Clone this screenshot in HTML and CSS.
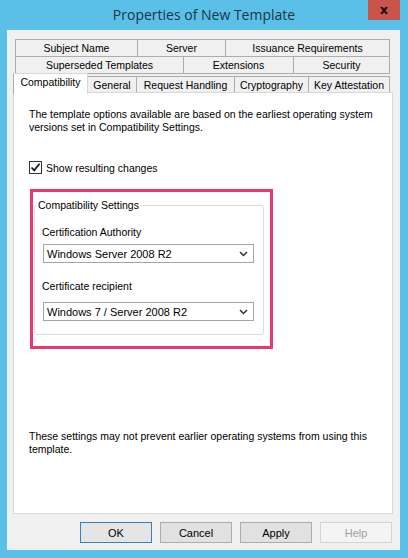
FILE: index.html
```html
<!DOCTYPE html>
<html lang="en">
<head>
  <meta charset="UTF-8">
  <title>Properties of New Template</title>
  <link rel="stylesheet" href="styles.css">
</head>
<body>

  <div class="window">
    <div class="titlebar">
      <span class="title">Properties of New Template</span>
      <button class="close-button">x</button>
    </div>

    <div class="client">
      <div class="tabs">
        <div class="tab-row row-1">
          <div class="tab">Subject Name</div>
          <div class="tab">Server</div>
          <div class="tab">Issuance Requirements</div>
        </div>
        <div class="tab-row row-2">
          <div class="tab">Superseded Templates</div>
          <div class="tab">Extensions</div>
          <div class="tab">Security</div>
        </div>
        <div class="tab-row row-3">
          <div class="tab selected">Compatibility</div>
          <div class="tab">General</div>
          <div class="tab">Request Handling</div>
          <div class="tab">Cryptography</div>
          <div class="tab">Key Attestation</div>
        </div>
      </div>

      <div class="panel">
        <p class="intro">The template options available are based on the earliest operating system versions set in Compatibility Settings.</p>

        <label class="check-row">
          <span class="checkbox">
            <svg width="11" height="11" viewBox="0 0 11 11"><path d="M1.5 5.5 L4.2 8.3 L9.5 1.8" fill="none" stroke="#1a1a1a" stroke-width="1.8"/></svg>
          </span>
          Show resulting changes
        </label>

        <div class="highlight">
          <fieldset class="group">
            <legend>Compatibility Settings</legend>

            <div class="field-label">Certification Authority</div>
            <div class="combo">
              <span>Windows Server 2008 R2</span>
              <svg width="9" height="6" viewBox="0 0 9 6"><path d="M1 1 L4.5 4.5 L8 1" fill="none" stroke="#333" stroke-width="1.5"/></svg>
            </div>

            <div class="field-label second">Certificate recipient</div>
            <div class="combo">
              <span>Windows 7 / Server 2008 R2</span>
              <svg width="9" height="6" viewBox="0 0 9 6"><path d="M1 1 L4.5 4.5 L8 1" fill="none" stroke="#333" stroke-width="1.5"/></svg>
            </div>
          </fieldset>
        </div>

        <p class="note">These settings may not prevent earlier operating systems from using this template.</p>
      </div>

      <div class="buttons">
        <button class="btn default">OK</button>
        <button class="btn">Cancel</button>
        <button class="btn">Apply</button>
        <button class="btn" disabled>Help</button>
      </div>
    </div>
  </div>

</body>
</html>
```

FILE: styles.css
```css
body {
  margin: 0;
  padding: 0;
  background-color: #5bc0e8;
  font-family: 'Liberation Sans', Arial, sans-serif;
  font-size: 10.5px;
  color: #000;
}

.window {
  width: 408px;
  height: 558px;
  display: flex;
  flex-direction: column;
}

.titlebar {
  height: 30px;
  display: flex;
  justify-content: center;
  align-items: center;
  position: relative;
}

.title {
  font-family: 'Open Sans', sans-serif;
  font-size: 14px;
  color: #1b3546;
  margin-top: -1px;
}

.close-button {
  position: absolute;
  top: 0;
  right: 8px;
  width: 32px;
  height: 20px;
  border: none;
  background-color: #c9544c;
  color: #111;
  font-family: 'DejaVu Sans', sans-serif;
  font-weight: bold;
  font-size: 13px;
  line-height: 18px;
  padding: 0;
}

.client {
  flex: 1;
  margin: 0 8px 8px 7px;
  background-color: #f0f0f0;
  padding: 9px 0 0 6px;
  display: flex;
  flex-direction: column;
}

/* tabs */
.tabs {
  height: 53px;
  display: flex;
  flex-direction: column;
}

.tab-row {
  display: flex;
  height: 18px;
}

.row-1, .row-2 {
  margin-left: 2px;
}

.row-2 {
  margin-top: -1px;
}

.row-3 {
  margin-top: 1px;
}

.tab {
  box-sizing: border-box;
  height: 18px;
  border: 1px solid #adadad;
  border-left: none;
  background-color: #f0f0f0;
  text-align: center;
  line-height: 16px;
  white-space: nowrap;
}

.tab-row .tab:first-child {
  border-left: 1px solid #adadad;
}

.row-1 .tab:nth-child(1) { width: 123px; }
.row-1 .tab:nth-child(2) { width: 88px; }
.row-1 .tab:nth-child(3) { width: 164px; }

.row-2 .tab:nth-child(1) { width: 169px; }
.row-2 .tab:nth-child(2) { width: 110px; }
.row-2 .tab:nth-child(3) { width: 96px; }

.row-3 .tab:nth-child(2) { width: 49px; }
.row-3 .tab:nth-child(3) { width: 98px; }
.row-3 .tab:nth-child(4) { width: 74px; }
.row-3 .tab:nth-child(5) { width: 81px; }

.row-3 .tab {
  height: 17px;
  margin-top: 1px;
  border-bottom: none;
}

.tab.selected {
  width: 75px;
  height: 21px;
  margin-top: -2px;
  background-color: #fff;
  border-color: #d9d9d9;
  line-height: 17px;
  position: relative;
  z-index: 1;
}

.panel {
  box-sizing: border-box;
  width: 380px;
  height: 422px;
  background-color: #fff;
  border: 1px solid #d9d9d9;
  padding: 15px 15px 0 15px;
}

.intro, .note {
  margin: 0;
  line-height: 13px;
}

.note {
  margin-top: 81px;
}

.check-row {
  display: flex;
  align-items: center;
  gap: 4px;
  margin-top: 27px;
}

.checkbox {
  box-sizing: border-box;
  width: 13px;
  height: 13px;
  border: 1px solid #333;
  background-color: #fff;
  display: flex;
  align-items: center;
  justify-content: center;
}

/* red annotation box */
.highlight {
  box-sizing: border-box;
  width: 243px;
  height: 160px;
  margin: 15px 0 0 1px;
  border: 3px solid #e8386c;
  padding: 7px 6px 0 1px;
}

.group {
  box-sizing: border-box;
  margin: 0;
  border: 1px solid #dcdcdc;
  border-radius: 3px;
  padding: 15px 9px 13px 7px;
}

.group legend {
  padding: 0 1px;
  margin-left: -5px;
}

.field-label {
  line-height: 13px;
  margin-bottom: 5px;
}

.field-label.second {
  margin-top: 17px;
  margin-bottom: 9px;
}

.combo {
  box-sizing: border-box;
  height: 19px;
  width: 211px;
  margin-left: 1px;
  border: 1px solid #a5a5a5;
  background-color: #fff;
  display: flex;
  align-items: center;
  justify-content: space-between;
  padding: 0 5px 0 3px;
  font-size: 11px;
}

/* buttons */
.buttons {
  display: flex;
  justify-content: flex-end;
  gap: 8px;
  margin-top: 8px;
  padding-right: 8px;
}

.btn {
  box-sizing: border-box;
  width: 72px;
  height: 21px;
  font-family: 'Liberation Sans', Arial, sans-serif;
  font-size: 11px;
  color: #000;
  background-color: #e1e1e1;
  border: 1px solid #adadad;
  padding: 0;
}

.btn.default {
  border-color: #3c7fb1;
  background-color: #e5e5e5;
}

.btn:disabled {
  background-color: #f4f4f4;
  border-color: #d4d4d4;
  color: #a0a0a0;
}
```
